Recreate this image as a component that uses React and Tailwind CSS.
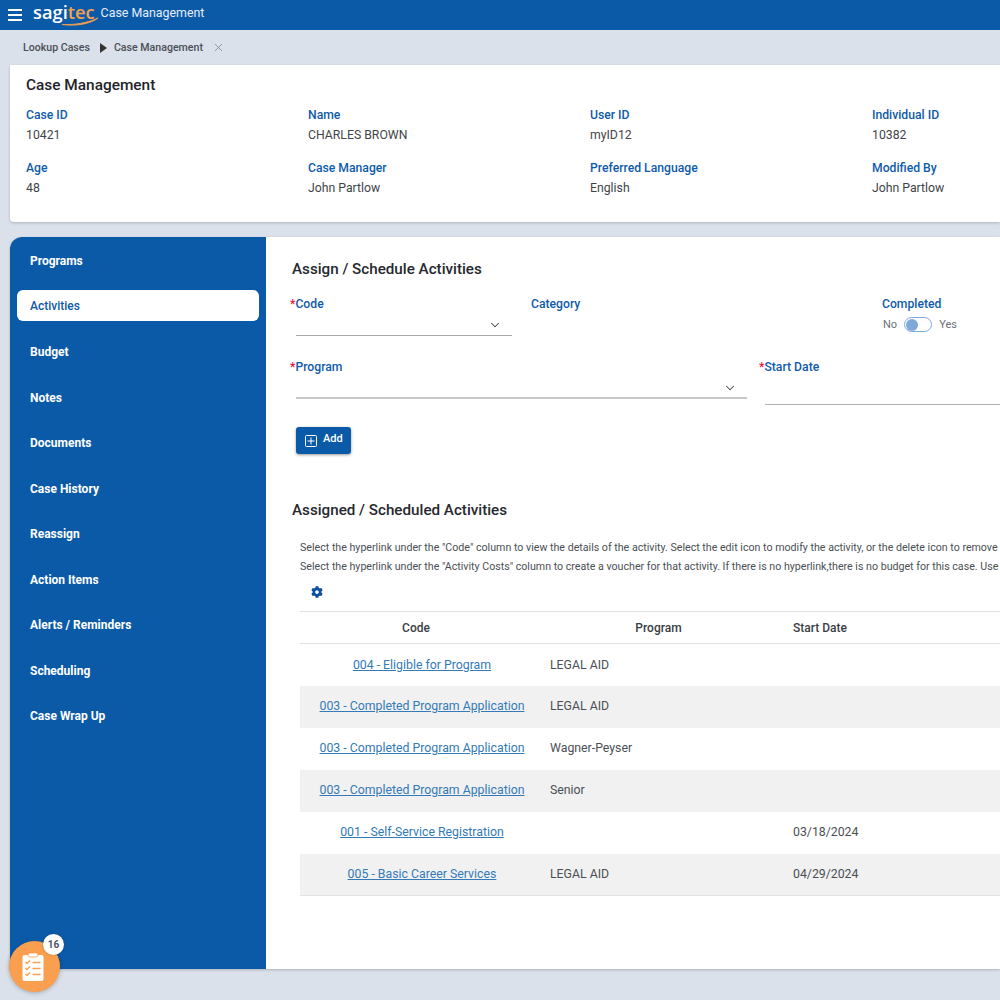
import { ChevronDown, X } from 'lucide-react';
import { FaCog } from 'react-icons/fa';

const FONT = 'font-["Roboto",sans-serif]';

const SUMMARY = [
  [['Case ID', '10421'], ['Name', 'CHARLES BROWN'], ['User ID', 'myID12'], ['Individual ID', '10382']],
  [['Age', '48'], ['Case Manager', 'John Partlow'], ['Preferred Language', 'English'], ['Modified By', 'John Partlow']],
];

const NAV = ['Programs', 'Activities', 'Budget', 'Notes', 'Documents', 'Case History', 'Reassign', 'Action Items', 'Alerts / Reminders', 'Scheduling', 'Case Wrap Up'];

const ROWS = [
  ['004 - Eligible for Program', 'LEGAL AID', ''],
  ['003 - Completed Program Application', 'LEGAL AID', ''],
  ['003 - Completed Program Application', 'Wagner-Peyser', ''],
  ['003 - Completed Program Application', 'Senior', ''],
  ['001 - Self-Service Registration', '', '03/18/2024'],
  ['005 - Basic Career Services', 'LEGAL AID', '04/29/2024'],
];

function Logo() {
  return (
    <div className="relative flex items-baseline font-['Open_Sans',sans-serif] text-[18.300px] font-semibold leading-none">
      <span className="text-white">sagi</span>
      <span className="text-[#f5a04c]">tec</span>
      <svg className="absolute left-0 top-[13px]" width="68" height="10" viewBox="0 0 68 10" fill="none">
        <path d="M29 8.500C42 9 54 7 65 2C58 8 42 10.500 29 8.500Z" fill="#f5a04c" stroke="#f5a04c" strokeWidth="0.8" />
      </svg>
    </div>
  );
}

function Label({ required, children }) {
  return (
    <div className="text-[12.200px] leading-4 font-medium text-[#0f5ba9]">
      {required && <span className="text-[#f0143c]">*</span>}
      {children}
    </div>
  );
}

function ClipboardIcon() {
  return (
    <svg width="22" height="28" viewBox="0 0 22 28">
      <rect x="0.500" y="2" width="21" height="26" rx="2" fill="#fff" />
      <rect x="6" y="0" width="10" height="4" rx="2" fill="#fff" stroke="#f99f4f" strokeWidth="0.8" />
      <g fill="none" stroke="#f99f4f" strokeWidth="1.400">
        <path d="M3.500 9l1.500 1.500 3-3M3.500 15l1.500 1.500 3-3M3.500 21l1.500 1.500 3-3" />
        <path d="M10.500 9.500h8M10.500 15.500h8M10.500 21.500h8" />
      </g>
    </svg>
  );
}

export default function App() {
  return (
    <div className={`relative flex h-[1000px] w-[1000px] flex-col overflow-hidden bg-[#dae1ea] ${FONT}`}>
      {/* top bar */}
      <header className="flex h-[30px] shrink-0 items-center bg-[#0b5aa8] pl-[8px]">
        <div className="flex w-[14px] flex-col gap-[3px]">
          <span className="h-[2px] bg-white" />
          <span className="h-[2px] bg-white" />
          <span className="h-[2px] bg-white" />
        </div>
        <div className="ml-[11px] -mt-[6px]">
          <Logo />
        </div>
        <span className="ml-[6px] -mt-[3px] text-[12.400px] text-[#e4edf6]">Case Management</span>
      </header>

      {/* breadcrumb */}
      <div className="flex h-[35px] shrink-0 items-center pl-[23px] text-[10.600px] font-medium text-[#4a4f57]">
        <span>Lookup Cases</span>
        <span className="ml-[10px] mr-[7px] h-0 w-0 border-y-[5px] border-l-[7px] border-y-transparent border-l-[#333]" />
        <span>Case Management</span>
        <X size={13} strokeWidth={1.25} className="ml-[9px] text-[#777]" />
      </div>

      {/* summary card */}
      <section className="ml-[10px] h-[157px] shrink-0 rounded-bl-[4px] bg-white pl-[16px] pt-[11px] shadow-[0_1px_3px_rgba(0,0,0,0.2)]">
        <h1 className="text-[15.400px] leading-[18px] font-medium text-[#1f2328]">Case Management</h1>
        <div className="mt-[13px] flex flex-col gap-[17px]">
          {SUMMARY.map((row) => (
            <div key={row[0][0]} className="grid grid-cols-[282px_282px_282px_1fr]">
              {row.map(([label, value]) => (
                <div key={label}>
                  <Label>{label}</Label>
                  <div className="mt-[4px] text-[12.250px] leading-[16px] text-[#3f444a]">{value}</div>
                </div>
              ))}
            </div>
          ))}
        </div>
      </section>

      {/* main panel */}
      <div className="mt-[15px] ml-[10px] flex h-[732px] shrink-0 rounded-tl-[12px] bg-white shadow-[0_1px_3px_rgba(0,0,0,0.2)]">
        <nav className="w-[256px] shrink-0 rounded-tl-[12px] bg-[#0b5aa8] pt-[7px] pl-[7px] pr-[7px]">
          {NAV.map((item) => (
            <div
              key={item}
              className={
                item === 'Activities'
                  ? 'flex h-[31px] mb-[14.500px] items-center rounded-[6px] bg-white pl-[13px] pt-[2px] text-[12px] font-medium text-[#0b5aa8]'
                  : 'flex h-[31px] mb-[14.500px] items-center pl-[13px] pt-[3px] text-[12px] font-bold text-white'
              }
            >
              {item}
            </div>
          ))}
        </nav>

        <main className="min-w-0 flex-1 overflow-hidden pt-[23px]">
          <h2 className="ml-[26px] text-[15.200px] leading-[18px] font-medium text-[#26292e]">Assign / Schedule Activities</h2>

          {/* form */}
          <div className="mt-[18px] flex h-[48px]">
            <div className="ml-[24px] w-[222px]">
              <Label required>Code</Label>
              <div className="ml-[6px] mt-[2px] flex h-[22px] w-[216px] items-start justify-end border-b border-[#a9a9a9] pr-[10px] pt-[4px]">
                <ChevronDown size={14} strokeWidth={1.75} className="text-[#444]" />
              </div>
            </div>
            <div className="ml-[19px] w-[351px]">
              <Label>Category</Label>
            </div>
            <div>
              <Label>Completed</Label>
              <div className="mt-[5px] flex items-center gap-[7px] pl-[1px] text-[11px] text-[#6c7077]">
                <span>No</span>
                <span className="-mt-[1px] flex h-[15px] w-[28px] items-center rounded-full border border-[#7fa9d6] pl-[1px]">
                  <span className="h-[12px] w-[12px] rounded-full bg-[#7fa9d6]" />
                </span>
                <span>Yes</span>
              </div>
            </div>
          </div>

          <div className="mt-[15px] flex h-[48px]">
            <div className="ml-[24px] w-[457px]">
              <Label required>Program</Label>
              <div className="ml-[6px] mt-[2px] flex h-[22px] w-[451px] items-start justify-end border-b-2 border-[#c8c8c8] pr-[10px] pt-[4px]">
                <ChevronDown size={14} strokeWidth={1.75} className="text-[#444]" />
              </div>
            </div>
            <div className="ml-[12px] flex-1">
              <Label required>Start Date</Label>
              <div className="ml-[6px] mt-[6px] h-[24px] border-b border-[#b8b0b4]" />
            </div>
          </div>

          <button className="ml-[30px] mt-[20px] flex h-[27px] w-[55px] items-center rounded-[3px] bg-[#0b5aa8] pl-[9px] text-[11px] font-medium text-white shadow-[0_1px_3px_rgba(0,0,0,0.4)]">
            <svg width="12" height="12" viewBox="0 0 12 12" fill="none" stroke="#fff" strokeWidth="1">
              <rect x="0.500" y="0.500" width="11" height="11" rx="1" />
              <path d="M6 2.500v7M2.500 6h7" />
            </svg>
            <span className="ml-[6px] -mt-[2px]">Add</span>
          </button>

          <h2 className="ml-[26px] mt-[47px] text-[15.200px] leading-[18px] font-medium text-[#26292e]">Assigned / Scheduled Activities</h2>

          <div className="ml-[34px] mt-[19px] whitespace-nowrap text-[10.650px] leading-[19px] text-[#4a4f55]">
            <p>Select the hyperlink under the "Code" column to view the details of the activity. Select the edit icon to modify the activity, or the delete icon to remove the activity.</p>
            <p>Select the hyperlink under the "Activity Costs" column to create a voucher for that activity. If there is no hyperlink,there is no budget for this case. Use the icon to add.</p>
          </div>

          <FaCog size={12} className="ml-[45px] mt-[10px] text-[#0b4ea2]" />

          {/* table */}
          <table className="ml-[34px] mt-[13px] w-[700px] table-fixed border-collapse text-[12.300px] text-[#4a4f55]">
            <thead>
              <tr className="h-[32px] border-y border-[#e3e3e3] text-[12px] font-medium text-[#3a3e44]">
                <th className="w-[232px] font-medium">Code</th>
                <th className="w-[253px] font-medium">Program</th>
                <th className="pl-[8px] text-left font-medium">Start Date</th>
              </tr>
            </thead>
            <tbody>
              {ROWS.map(([code, program, date], i) => (
                <tr key={i} className={`h-[42px] ${i % 2 === 1 ? 'bg-[#f1f1f1]' : ''} ${i === ROWS.length - 1 ? 'border-b border-[#e3e3e3]' : ''}`}>
                  <td className="pl-[12px] text-center text-[#337ab7] underline">{code}</td>
                  <td className="pl-[18px]">{program}</td>
                  <td className="pl-[8px]">{date}</td>
                </tr>
              ))}
            </tbody>
          </table>
        </main>
      </div>

      {/* floating task button */}
      <div className="absolute left-[9px] top-[941px] flex h-[51px] w-[51px] items-center justify-center rounded-full bg-[#f99f4f] pr-[3px] shadow-[0_1px_4px_rgba(0,0,0,0.25)]">
        <ClipboardIcon />
        <span className="absolute -right-[4px] -top-[7px] flex h-[21px] w-[21px] items-center justify-center rounded-full bg-white text-[10px] font-bold text-[#4a5568] shadow-[0_0_2px_rgba(0,0,0,0.3)]">16</span>
      </div>
    </div>
  );
}
